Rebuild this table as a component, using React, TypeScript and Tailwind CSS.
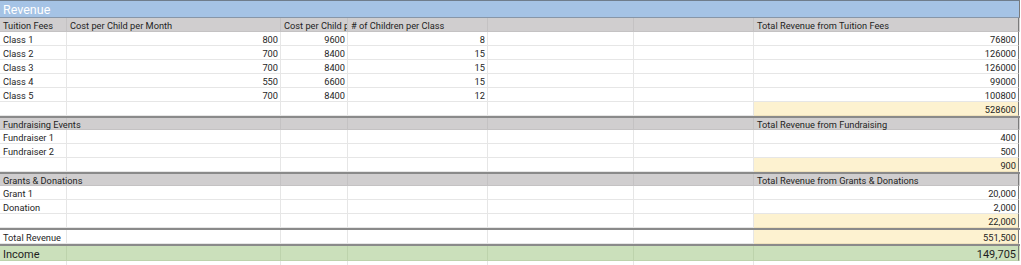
const grid = "grid grid-cols-[67px_214px_67px_140px_146px_120px_265px]";

type Cell = { text?: string; right?: boolean; clip?: boolean; yellow?: boolean };

type RowProps = {
  cells: Cell[];
  tone?: "white" | "gray" | "green";
  thick?: boolean;
  height?: string;
  big?: boolean;
};

const Row = ({ cells, tone = "white", thick, height = "h-[14px]", big }: RowProps) => {
  const bg = tone === "gray" ? "bg-[#d0cecf]" : tone === "green" ? "bg-[#cbe0bb]" : "bg-white";
  const line = tone === "gray" ? "border-[#c4c2c3]" : tone === "green" ? "border-[#bdd3ac]" : "border-[#e6e6e6]";
  return (
    <div className={`${grid} ${height} ${bg} ${thick ? "border-t-2 border-t-[#8a8a8a]" : ""}`}>
      {cells.map((c, i) => (
        <div
          key={i}
          className={`flex items-center px-[3px] border-b border-r ${line} ${c.clip ? "overflow-hidden" : "overflow-visible"} whitespace-nowrap ${c.right ? "justify-end pr-[2px]" : ""} ${c.yellow ? "bg-[#fdf2d0] border-b-[#efe2bd]" : ""} ${big ? "text-[11px]" : "text-[9.25px]"} ${i === 6 ? "border-r-[#7a7a7a]" : ""}`}
        >
          <span className={`relative z-10 leading-none ${big ? "top-px" : "top-[1.5px]"}`}>{c.text}</span>
        </div>
      ))}
    </div>
  );
};

const blank = (n: number): Cell[] => Array.from({ length: n }, () => ({}));

const classes = [
  ["Class 1", "800", "9600", "8", "76800"],
  ["Class 2", "700", "8400", "15", "126000"],
  ["Class 3", "700", "8400", "15", "126000"],
  ["Class 4", "550", "6600", "15", "99000"],
  ["Class 5", "700", "8400", "12", "100800"],
];

export default function App() {
  return (
    <div className="w-[1021px] h-[265px] bg-white text-[#1e1e1e] font-['Roboto','Lato',sans-serif] overflow-hidden">
      <div className="w-[1020px]">
        <div className="h-[18px] bg-[#a5c3e5] border-t border-[#6f7d8c] border-b border-b-[#8796a8] border-r border-r-[#7a7a7a] flex items-center pl-[3px] text-white text-[12.5px] leading-none">
          <span className="relative top-px">Revenue</span>
        </div>
        <Row
          tone="gray"
          cells={[
            { text: "Tuition Fees" },
            { text: "Cost per Child per Month", clip: true },
            { text: "Cost per Child per Year", clip: true },
            { text: "# of Children per Class", clip: true },
            {},
            {},
            { text: "Total Revenue from Tuition Fees" },
          ]}
        />
        {classes.map((r) => (
          <Row
            key={r[0]}
            cells={[
              { text: r[0] },
              { text: r[1], right: true },
              { text: r[2], right: true },
              { text: r[3], right: true },
              {},
              {},
              { text: r[4], right: true },
            ]}
          />
        ))}
        <Row cells={[...blank(6), { text: "528600", right: true, yellow: true }]} />
        <Row
          tone="gray"
          thick
          cells={[{ text: "Fundraising Events" }, ...blank(5), { text: "Total Revenue from Fundraising" }]}
        />
        <Row cells={[{ text: "Fundraiser 1" }, ...blank(5), { text: "400", right: true }]} />
        <Row cells={[{ text: "Fundraiser 2" }, ...blank(5), { text: "500", right: true }]} />
        <Row cells={[...blank(6), { text: "900", right: true, yellow: true }]} />
        <Row
          tone="gray"
          thick
          cells={[{ text: "Grants & Donations" }, ...blank(5), { text: "Total Revenue from Grants & Donations" }]}
        />
        <Row cells={[{ text: "Grant 1" }, ...blank(5), { text: "20,000", right: true }]} />
        <Row cells={[{ text: "Donation" }, ...blank(5), { text: "2,000", right: true }]} />
        <Row cells={[...blank(6), { text: "22,000", right: true, yellow: true }]} />
        <Row
          thick
          height="h-[16px]"
          cells={[{ text: "Total Revenue" }, ...blank(5), { text: "551,500", right: true, yellow: true }]}
        />
        <Row
          tone="green"
          thick
          big
          height="h-[17px]"
          cells={[{ text: "Income" }, ...blank(5), { text: "149,705", right: true }]}
        />
        <div className={`${grid} h-[10px]`}>
          {blank(7).map((_, i) => (
            <div key={i} className={`border-r ${i === 6 ? "border-white" : "border-[#e6e6e6]"}`} />
          ))}
        </div>
      </div>
    </div>
  );
}
